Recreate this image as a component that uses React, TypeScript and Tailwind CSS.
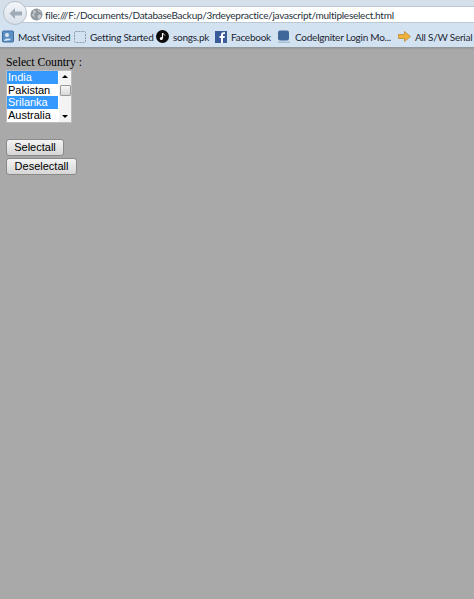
import React from "react";

const sans = "font-['Liberation_Sans',Arial,sans-serif]";
const ui = "font-['Lato','Noto_Sans',sans-serif]";

const countries = [
  { name: "India", selected: true },
  { name: "Pakistan", selected: false },
  { name: "Srilanka", selected: true },
  { name: "Australia", selected: false },
];

function Bookmark({ icon, label, className }: { icon: React.ReactNode; label: string; className?: string }) {
  return (
    <div className={`flex items-center gap-[4px] shrink-0 ${className ?? ""}`}>
      {icon}
      <span className="text-[10px] tracking-[-0.25px] leading-none text-[#1d2733] whitespace-nowrap">{label}</span>
    </div>
  );
}

function Toolbar() {
  return (
    <div className={`${ui} shrink-0`}>
      {/* Address bar */}
      <div className="relative h-[26px] bg-gradient-to-b from-[#d5dfe9] to-[#d3e2f1] pt-[6px] overflow-hidden">
        <div className="h-[17px] ml-[14px] bg-white border-y border-[#bcc8d3] flex items-center pl-[16px]">
          <svg width="13" height="13" viewBox="0 0 13 13" className="shrink-0">
            <circle cx="6.5" cy="6.5" r="6" fill="#8f979e" />
            <path d="M3 2.5c2 0 3 1 2.5 2S3 5 2.5 6.5 4.5 8 5 9.5M8 1.5C7.5 3 9 4 11.5 4M8.5 7c1.5-.5 2.5 0 2.5 1s-1.5 2.5-2.5 3C8 9.5 7.5 8 8.5 7z" fill="#c7ccd1" stroke="#c7ccd1" strokeWidth="0.6" />
          </svg>
          <span className="ml-[2px] text-[10px] tracking-[-0.25px] leading-none text-[#26303a] whitespace-nowrap">
            file:///F:/Documents/DatabaseBackup/3rdeyepractice/javascript/multipleselect.html
          </span>
        </div>
        {/* Back button */}
        <div className="absolute left-[3px] top-[1px] w-[24px] h-[24px] rounded-full bg-gradient-to-b from-[#f3f6f9] to-[#d8e0e8] border border-[#b4bfca] flex items-center justify-center">
          <svg width="15" height="13" viewBox="0 0 15 13">
            <path d="M7 1 1.5 6.5 7 12V8.5h7v-4H7z" fill="#9fabb7" />
          </svg>
        </div>
      </div>
      {/* Bookmarks bar */}
      <div className="h-[21px] bg-[#d3e2f1] flex items-center pl-[2px] overflow-hidden">
        <Bookmark
          className="w-[72px]"
          label="Most Visited"
          icon={
            <svg width="12" height="13" viewBox="0 0 12 13" className="shrink-0">
              <rect x="0.5" y="1" width="11" height="11" rx="1" fill="#5c8fc4" stroke="#3e6d9f" />
              <circle cx="5" cy="5" r="2" fill="#dbe8f4" />
              <path d="M2 11c1-3 5-3 7-1z" fill="#dbe8f4" />
            </svg>
          }
        />
        <Bookmark
          className="w-[82px]"
          label="Getting Started"
          icon={
            <svg width="12" height="12" viewBox="0 0 12 12" className="shrink-0">
              <rect x="0.5" y="0.5" width="11" height="11" rx="1" fill="none" stroke="#8a96a3" strokeDasharray="2 1" />
            </svg>
          }
        />
        <Bookmark
          className="w-[59px]"
          label="songs.pk"
          icon={
            <svg width="13" height="13" viewBox="0 0 13 13" className="shrink-0">
              <circle cx="6.5" cy="6.5" r="6.5" fill="#0b0b0b" />
              <path d="M6.5 3v5" stroke="#fff" strokeWidth="1.2" />
              <circle cx="5.3" cy="8.5" r="1.5" fill="#fff" />
              <path d="M6.5 3c.5 1 2 1.5 2.5 2.5" stroke="#fff" fill="none" />
            </svg>
          }
        />
        <Bookmark
          className="w-[62px]"
          label="Facebook"
          icon={
            <svg width="12" height="12" viewBox="0 0 12 12" className="shrink-0">
              <rect width="12" height="12" fill="#3b5a98" />
              <path d="M8 12V7h1.6l.2-2H8V4c0-.6.2-1 1-1h1V1.2H8.5C6.8 1.2 6 2.2 6 3.700V5H4.500v2H6v5z" fill="#fff" />
            </svg>
          }
        />
        <Bookmark
          className="w-[121px]"
          label="CodeIgniter Login Mo..."
          icon={
            <svg width="14" height="14" viewBox="0 0 14 14" className="shrink-0">
              <rect x="1" y="0.5" width="11" height="10" rx="2" fill="#3f6797" />
              <path d="M1 11.5h12V13H1z" fill="#a9bfd6" />
            </svg>
          }
        />
        <Bookmark
          label="All S/W Serial K"
          icon={
            <svg width="13" height="11" viewBox="0 0 13 11" className="shrink-0">
              <path d="M0.5 3.5h6V.5l6 5-6 5v-3h-6z" fill="#eeb13a" stroke="#b9832a" strokeWidth="0.7" />
            </svg>
          }
        />
      </div>
    </div>
  );
}

function ListBox() {
  return (
    <div className="w-[66px] h-[53px] bg-white border border-[#bcbcbc] flex overflow-hidden">
      <ul className="w-[51px] text-[11px] leading-[12.5px] text-black">
        {countries.map((c) => (
          <li key={c.name} className={`pl-[1px] h-[12.5px] ${c.selected ? "bg-[#3399ff] text-white" : ""}`}>
            {c.name}
          </li>
        ))}
      </ul>
      <div className="flex-1 ml-[1px] bg-[#f3f3f3] flex flex-col items-center justify-between py-[4px] relative">
        <div className="w-0 h-0 border-x-[3px] border-x-transparent border-b-[3px] border-b-black" />
        <div className="w-0 h-0 border-x-[3px] border-x-transparent border-t-[3px] border-t-black" />
        <div className="absolute left-[1px] top-[14px] w-[11px] h-[11px] rounded-[1px] bg-gradient-to-b from-[#f6f6f6] to-[#d8d8d8] border border-[#9a9a9a]" />
      </div>
    </div>
  );
}

function PageButton({ label, className }: { label: string; className: string }) {
  return (
    <button
      className={`block h-[17px] rounded-[3px] border border-[#8a8a8a] bg-gradient-to-b from-[#f4f4f4] to-[#d6d6d6] text-[11px] leading-none text-black ${className}`}
    >
      {label}
    </button>
  );
}

export default function App() {
  return (
    <div className="w-[474px] h-[599px] overflow-hidden flex flex-col bg-[#a9a9a9]">
      <Toolbar />
      <div className="h-[3px] shrink-0 bg-gradient-to-b from-[#8f959b] to-[#a9a9a9]" />
      <main className={`${sans} flex-1 pl-[6px] pt-[6px]`}>
        <p className="font-['Liberation_Serif',serif] text-[11.7px] leading-[14px] text-black whitespace-nowrap">
          Select Country :
        </p>
        <ListBox />
        <div className="mt-[16px] flex flex-col gap-[2px]">
          <PageButton label="Selectall" className="w-[58px]" />
          <PageButton label="Deselectall" className="w-[71px]" />
        </div>
      </main>
    </div>
  );
}
